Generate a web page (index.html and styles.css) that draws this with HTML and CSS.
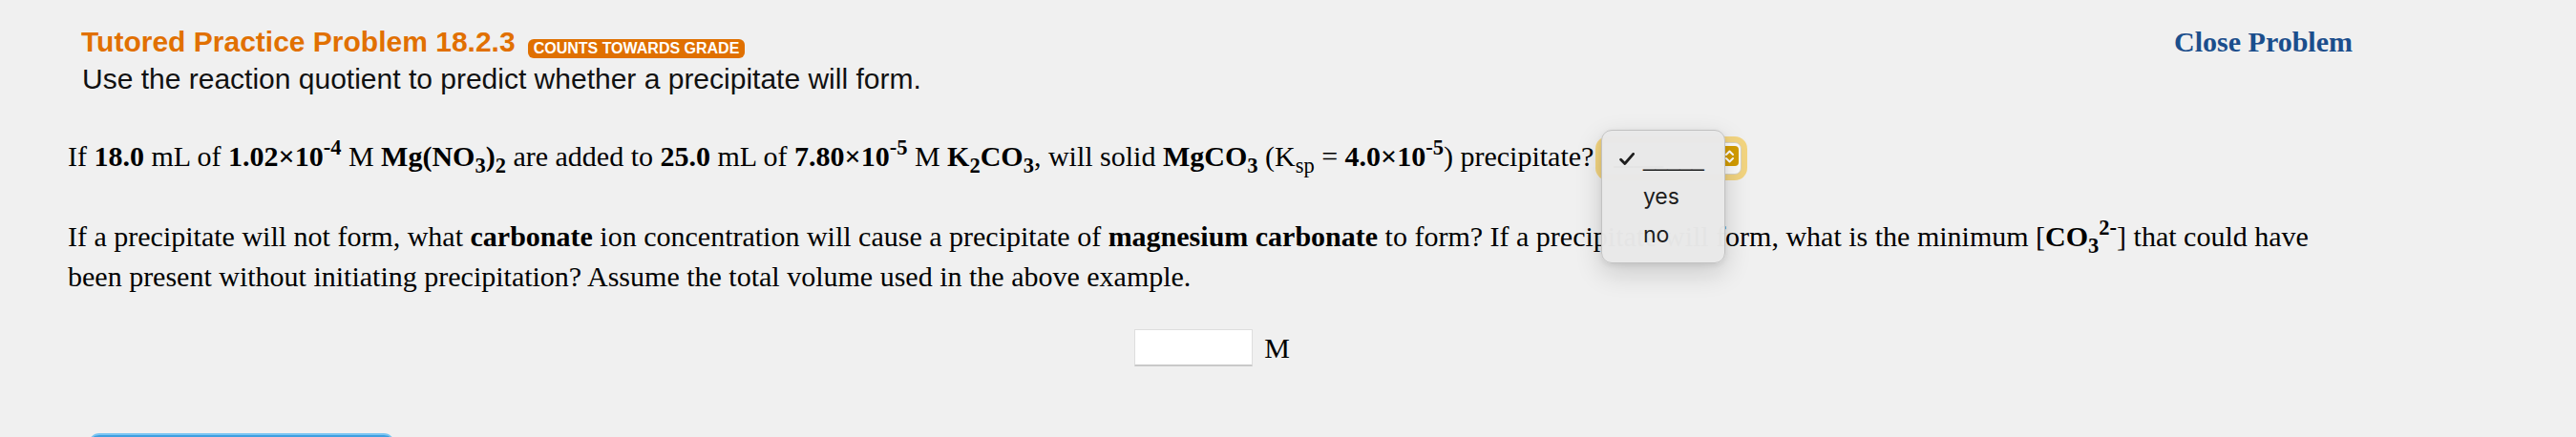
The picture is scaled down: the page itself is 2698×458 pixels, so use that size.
FILE: index.html
```html
<!DOCTYPE html>
<html lang="en">
<head>
<meta charset="utf-8">
<title>Tutored Practice Problem 18.2.3</title>
<link rel="stylesheet" href="styles.css">
</head>
<body>
<div class="page">
  <header class="header">
    <h1 class="title">Tutored Practice Problem 18.2.3<span class="badge">COUNTS TOWARDS GRADE</span></h1>
    <a class="close-link" href="#">Close Problem</a>
  </header>
  <p class="subtitle">Use the reaction quotient to predict whether a precipitate will form.</p>

  <p class="question">If <b>18.0</b> mL of <b>1.02×10<sup>-4</sup></b> M <b>Mg(NO<sub>3</sub>)<sub>2</sub></b> are added to <b>25.0</b> mL of <b>7.80×10<sup>-5</sup></b> M <b>K<sub>2</sub>CO<sub>3</sub></b>, will solid <b>MgCO<sub>3</sub></b> (K<sub>sp</sub> = <b>4.0×10<sup>-5</sup></b>) precipitate? <span class="select"><span class="select-value">_____</span><span class="select-arrow"><svg width="11" height="16" viewBox="0 0 11 16"><path d="M2 6 L5.5 2.5 L9 6 M2 10 L5.5 13.5 L9 10" fill="none" stroke="#fff" stroke-width="2" stroke-linecap="round" stroke-linejoin="round"/></svg></span><span class="menu">
        <span class="menu-item"><svg class="check" width="16" height="13" viewBox="0 0 16 13"><path d="M1.6 7.2 L5.8 11.5 L14.6 1.4" fill="none" stroke="#1e1e1e" stroke-width="2.8" stroke-linecap="round" stroke-linejoin="round"/></svg><span class="menu-text blank">_____</span></span>
        <span class="menu-item"><span class="check-slot"></span><span class="menu-text">yes</span></span>
        <span class="menu-item"><span class="check-slot"></span><span class="menu-text">no</span></span>
      </span></span></p>

  <p class="question">If a precipitate will not form, what <b>carbonate</b> ion concentration will cause a precipitate of <b>magnesium carbonate</b> to form? If a precipitate will form, what is the minimum [<b>CO<sub>3</sub><sup>2-</sup></b>] that could have been present without initiating precipitation? Assume the total volume used in the above example.</p>

  <div class="answer">
    <input class="answer-input" type="text" aria-label="answer">
    <span class="unit">M</span>
  </div>

  <div class="submit-btn"></div>
</div>
</body>
</html>
```

FILE: styles.css
```css
html, body {
  margin: 0;
  padding: 0;
  overflow: hidden;
  background: #f0f0f0;
}

.page {
  padding: 0 230px 0 71px;
  font-family: "Liberation Serif", "Times New Roman", serif;
  color: #000;
}

.header {
  display: flex;
  justify-content: space-between;
  align-items: baseline;
  padding: 27px 4px 0 14px;
}

.title {
  margin: 0;
  font-family: "Liberation Sans", Arial, sans-serif;
  font-weight: bold;
  font-size: 30px;
  line-height: 34px;
  color: #e17000;
}

.badge {
  display: inline-block;
  margin-left: 13px;
  padding: 0 6px;
  font-size: 16px;
  line-height: 20px;
  font-weight: bold;
  color: #fff;
  background: #e07000;
  border-radius: 6px;
  vertical-align: -2px;
}

.close-link {
  font-family: "Liberation Serif", "Times New Roman", serif;
  font-weight: bold;
  font-size: 30px;
  line-height: 34px;
  color: #1b4e8c;
  text-decoration: none;
}

.subtitle {
  margin: 5px 0 0 15px;
  font-family: "Liberation Sans", Arial, sans-serif;
  font-size: 30px;
  line-height: 34px;
  color: #111;
}

.question {
  margin: 43px 0 0 0;
  font-size: 30px;
  line-height: 42px;
}

.question + .question {
  margin-top: 42px;
}

sup, sub {
  font-size: 0.75em;
  line-height: 0;
}

sup {
  vertical-align: 0.55em;
}

sub {
  vertical-align: -0.31em;
}

.select {
  position: relative;
  display: inline-flex;
  align-items: center;
  box-sizing: border-box;
  width: 147px;
  height: 34px;
  padding: 0 2px 0 12px;
  background: #fbfbfb;
  border: 1px solid #d8d2c0;
  border-radius: 7px;
  box-shadow: 0 0 0 6px #f2d480;
}

.select-value {
  flex: 1;
  font-family: Inter, "Liberation Sans", sans-serif;
  font-size: 23px;
  line-height: 26px;
  color: #222;
}

.select-arrow {
  display: flex;
  align-items: center;
  justify-content: center;
  width: 18px;
  height: 21px;
  margin-top: -5px;
  background: #d39c00;
  border-radius: 4px;
}

.menu {
  position: absolute;
  right: 16px;
  top: -14px;
  display: flex;
  flex-direction: column;
  box-sizing: border-box;
  width: 130px;
  height: 140px;
  padding-top: 9px;
  background: rgba(233, 233, 233, 0.98);
  border: 1px solid #c2c2c2;
  border-radius: 11px;
  box-shadow: 0 10px 28px rgba(0, 0, 0, 0.16), 0 2px 6px rgba(0, 0, 0, 0.08);
}

.menu-item {
  display: flex;
  align-items: center;
  height: 40px;
  padding-left: 18px;
  font-family: Inter, "Liberation Sans", sans-serif;
  font-size: 23px;
  line-height: 40px;
  color: #1d1d1d;
}

.menu-text.blank {
  font-family: "Liberation Sans", Arial, sans-serif;
}

.check,
.check-slot {
  flex: none;
  width: 16px;
  height: 13px;
  margin-right: 9px;
}

.answer {
  display: flex;
  justify-content: center;
  align-items: center;
  gap: 12px;
  margin-top: 34px;
}

.answer-input {
  box-sizing: border-box;
  width: 124px;
  height: 39px;
  margin: 0;
  padding: 0 6px;
  background: #fff;
  border: 1px solid #dedede;
  border-bottom: 2px solid #c9c9c9;
  border-radius: 1px;
  outline: none;
}

.unit {
  font-size: 30px;
  line-height: 30px;
}

.submit-btn {
  width: 320px;
  height: 50px;
  margin: 70px 0 0 22px;
  box-sizing: border-box;
  background: #3f9fe0;
  border-top: 2px solid #7cc6f2;
  border-radius: 11px;
}
```
